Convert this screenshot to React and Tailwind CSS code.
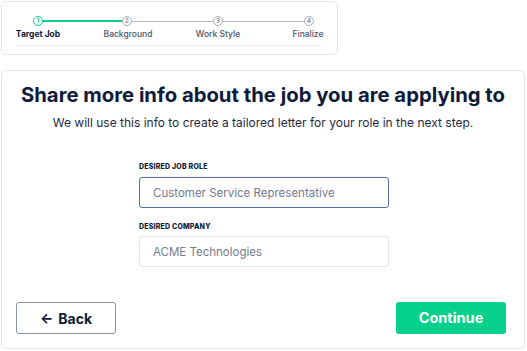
import React from 'react';

const steps = ['Target Job', 'Background', 'Work Style', 'Finalize'];

function StepDot({ n, active }) {
  return (
    <div
      className={
        'w-[10px] h-[10px] shrink-0 rounded-full border-[1.5px] bg-white flex items-center justify-center text-[6px] font-bold leading-none ' +
        (active ? 'border-[#06cf8a] text-[#06cf8a]' : 'border-[#a9adb8] text-[#8d929e]')
      }
    >
      {n}
    </div>
  );
}

export default function App() {
  return (
    <div className="w-[527px] h-[351px] bg-white pt-px pl-px" style={{ fontFamily: 'Inter, "Liberation Sans", sans-serif' }}>
      {/* stepper card */}
      <div className="w-[337px] h-[54px] border border-[#e3e5ea] rounded-[5px] px-[15px] pt-[14px]">
        <div className="flex items-center pl-[16px]">
          <StepDot n={1} active />
          <div className="w-[79px] h-[2px] bg-[#06cf8a]" />
          <StepDot n={2} />
          <div className="w-[81px] h-px bg-[#b5b9c3]" />
          <StepDot n={3} />
          <div className="w-[81px] h-px bg-[#b5b9c3]" />
          <StepDot n={4} />
        </div>
        <div className="flex mt-[2px] ml-[-19px] gap-[10px] text-[8.5px] leading-[12px]">
          {steps.map((s, i) => (
            <div
              key={s}
              className={'w-[80px] shrink-0 text-center ' + (i === 0 ? 'font-bold text-[#101a36]' : 'font-medium text-[#4b5266]')}
            >
              {s}
            </div>
          ))}
        </div>
        <div className="mt-[5px] h-px bg-[#eceef2]" />
      </div>

      {/* main card */}
      <div className="mt-[15px] w-[524px] h-[279px] border border-[#e3e5ea] rounded-[5px] flex flex-col">
        <h1 className="mt-[11px] text-center text-[20.3px] leading-[26px] font-bold text-[#0e1a3a]">
          Share more info about the job you are applying to
        </h1>
        <p className="mt-[7px] text-center text-[12px] leading-[16px] text-[#1f2a44]">
          We will use this info to create a tailored letter for your role in the next step.
        </p>

        <div className="mt-[31px] ml-[137px] w-[250px] flex flex-col">
          <label className="text-[7px] leading-[10px] font-extrabold text-[#0e1a3a] tracking-[0.2px]">DESIRED JOB ROLE</label>
          <input
            className="mt-[5px] h-[31px] w-full border border-[#5a6aa3] rounded-[3px] px-[13px] text-[11.5px] text-[#1f2a44] placeholder:text-[#737a8c] outline-none"
            placeholder="Customer Service Representative"
          />
          <label className="mt-[14px] text-[7px] leading-[10px] font-extrabold text-[#0e1a3a] tracking-[0.2px]">DESIRED COMPANY</label>
          <input
            className="mt-[4px] h-[31px] w-full border border-[#dfe3ea] rounded-[3px] px-[13px] text-[11.5px] text-[#1f2a44] placeholder:text-[#737a8c] outline-none"
            placeholder="ACME Technologies"
          />
        </div>

        <div className="mt-auto mb-[14px] flex justify-between pl-[14px] pr-[18px]">
          <button className="w-[100px] h-[32px] border-[1.5px] border-[#8893ae] rounded-[3px] flex items-center justify-center gap-[5px] text-[14px] font-bold text-[#101a36]">
            <span className="text-[14px] leading-none">←</span>
            <span>Back</span>
          </button>
          <button className="w-[110px] h-[32px] bg-[#05d18c] rounded-[3px] text-[14.5px] font-bold text-white">
            Continue
          </button>
        </div>
      </div>
    </div>
  );
}
